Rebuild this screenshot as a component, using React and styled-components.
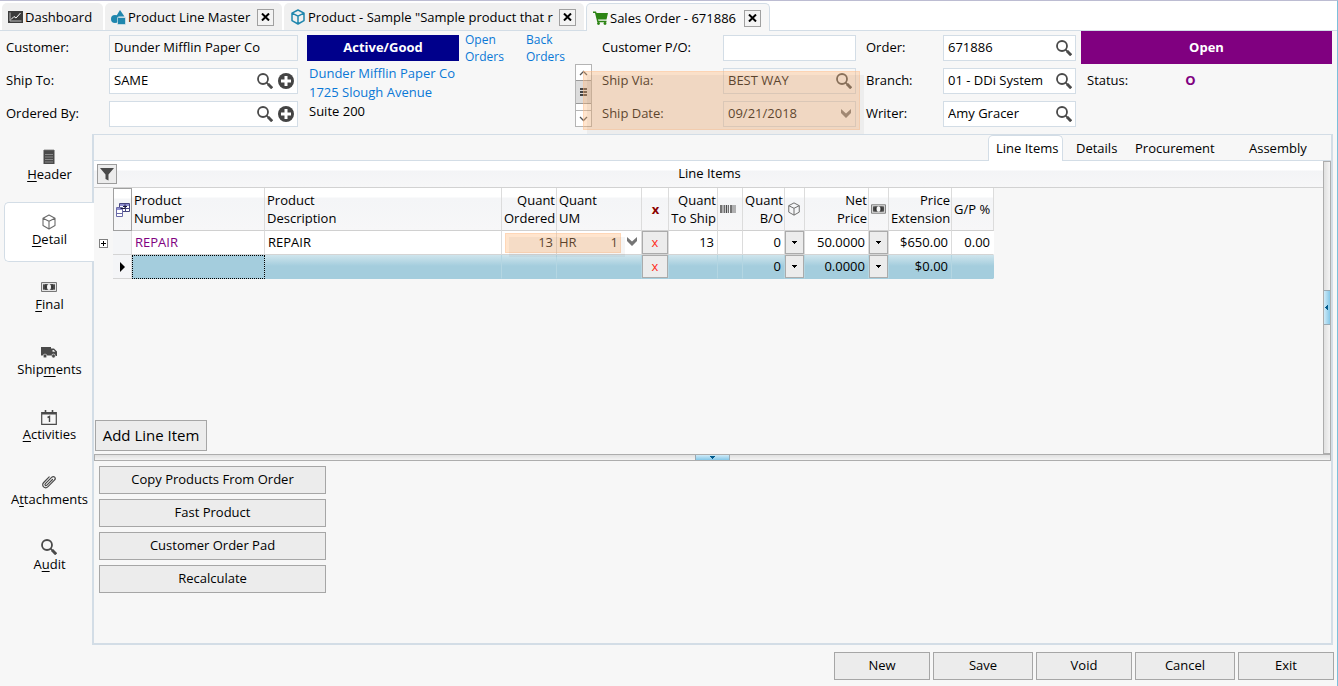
import React from "react";
import styled, { createGlobalStyle, css } from "styled-components";

const line = "#d3dde6";
const ink = "#4a4a4a";
const link = "#0a78d6";

const GlobalStyle = createGlobalStyle`
  * { box-sizing: border-box; }
  body { margin: 0; background: #f7f7f7; }
  body, button, input { font-family: "Open Sans", "Noto Sans", sans-serif; font-size: 13px; line-height: 18px; color: #000; }
  button { padding: 0; cursor: pointer; }
  a { color: ${link}; text-decoration: none; }
  svg { display: block; flex: none; }
`;

const Page = styled.div`
  min-height: 100vh;
  display: flex;
  flex-direction: column;
  border-top: 1px solid #bcbcd2;
  border-right: 1px solid #7cc0dc;
  background: #f7f7f7;
`;

/* document tabs */
const TabBar = styled.nav`
  display: flex;
  gap: 2px;
  height: 30px;
  padding: 2px 0 0 2px;
  background: #fff;
  border-bottom: 1px solid ${line};
`;
const DocTab = styled.div`
  display: flex;
  align-items: center;
  height: 27px;
  padding: 1px 8px 0 6px;
  background: #f0f0f0;
  border-radius: 5px 5px 0 0;
  ${(p) => p.$active && css`
    height: 28px;
    background: #f7f7f7;
    border: 1px solid ${line};
    border-bottom: 0;
  `}
`;
const DocTabLink = styled.a`
  display: flex;
  align-items: center;
  gap: 2px;
  width: ${(p) => p.$w}px;
  white-space: nowrap;
  color: #000;
`;
const CloseButton = styled.button`
  display: grid;
  place-items: center;
  width: 17px;
  height: 17px;
  background: #f3f3f3;
  border: 1px solid #a0a0a0;
`;

/* order header form */
const HeaderForm = styled.form`
  display: flex;
  align-items: flex-start;
  height: 103px;
  padding: 0 5px 0 6px;
`;
const FieldGroup = styled.div`
  position: relative;
  display: grid;
  grid-template-columns: ${(p) => p.$cols};
  grid-auto-rows: 26px;
  row-gap: 7px;
  align-items: center;
  margin: 4px ${(p) => p.$after}px 0 0;
  label { padding-bottom: 2px; }
`;
const Field = styled.div`
  display: flex;
  align-items: center;
  gap: 5px;
  height: 26px;
  padding-right: 3px;
  background: ${(p) => (p.$muted ? "#f7f7f7" : "#fff")};
  border: 1px solid ${line};
`;
const TextInput = styled.input`
  flex: 1;
  min-width: 0;
  height: 24px;
  padding: 0 0 2px 4px;
  border: 0;
  outline: 0;
  background: transparent;
`;
const IconButton = styled.button`
  display: grid;
  place-items: center;
  min-width: 16px;
  height: 16px;
  border: 0;
  background: transparent;
`;
const PickerButton = styled(IconButton)`
  min-width: 12px;
  padding-bottom: 2px;
`;
const Account = styled.div`
  width: 285px;
  margin: 4px 10px 0 0;
`;
const AccountTop = styled.div`
  display: flex;
  height: 26px;
`;
const Standing = styled.div`
  width: 152px;
  line-height: 25px;
  text-align: center;
  font-weight: 700;
  color: #fff;
  background: #00008b;
`;
const OrdersLink = styled.a`
  width: 55px;
  height: 34px;
  margin: -4px 0 0 6px;
  font-size: 12px;
  line-height: 17px;
`;
const AddressBox = styled.div`
  display: flex;
  justify-content: space-between;
  height: 63px;
  margin-top: 3px;
`;
const Address = styled.address`
  display: flex;
  flex-direction: column;
  padding-left: 2px;
  font-style: normal;
  line-height: 19px;
`;
const ScrollBar = styled.div`
  display: flex;
  flex-direction: column;
  justify-content: space-between;
  width: 17px;
  background: #fff;
  border: 1px solid #b4b4b4;
`;
const ScrollPart = styled.button`
  display: grid;
  place-items: center;
  height: ${(p) => p.$h}px;
  border: 0;
  ${(p) => p.$thumb
    ? css`background: #dcdcdc; border-top: 1px solid #999; border-bottom: 1px solid #999; margin-bottom: 6px;`
    : css`background: #fff;`}
  ${(p) => p.$top && css`border-top: 1px solid #b4b4b4;`}
`;
const Marker = styled.div`
  position: absolute;
  z-index: 2;
  pointer-events: none;
  left: ${(p) => p.$x}px;
  top: ${(p) => p.$y}px;
  width: ${(p) => p.$w}px;
  height: ${(p) => p.$h}px;
  background: rgba(255, 184, 120, 0.36);
  border: 1px solid rgba(255, 190, 140, 0.35);
  &::after {
    content: "";
    position: absolute;
    inset: 3px -5px -5px 3px;
    background: rgba(90, 90, 90, 0.06);
  }
`;
const StatusArea = styled.div`
  flex: 1;
  min-width: 180px;
`;
const StatusBanner = styled.div`
  height: 33px;
  line-height: 33px;
  text-align: center;
  font-weight: 700;
  color: #fff;
  background: #800080;
`;
const StatusLine = styled.div`
  display: flex;
  gap: 57px;
  padding: 7px 0 0 6px;
  strong { color: #800080; }
`;

/* body */
const Body = styled.div`
  flex: 1;
  display: flex;
  padding-right: 4px;
`;
const SideNav = styled.nav`
  display: flex;
  flex-direction: column;
  gap: 5px;
  width: 92px;
  padding: 3px 0 0 4px;
`;
const SideItem = styled.a`
  display: flex;
  flex-direction: column;
  align-items: center;
  height: 60px;
  padding: 11px 0 0 1px;
  color: #000;
  border: 1px solid transparent;
  white-space: nowrap;
  ${(p) => p.$active && css`
    z-index: 1;
    margin-right: -2px;
    padding-right: 3px;
    background: #fff;
    border-color: ${line};
    border-right: 0;
    border-radius: 5px 0 0 5px;
  `}
  span { padding-left: 2px; }
  u { text-underline-offset: 2px; }
`;
const Workspace = styled.main`
  flex: 1;
  min-width: 0;
  display: flex;
  flex-direction: column;
  border: 2px solid ${line};
  border-top-width: 1px;
`;
const ViewTabs = styled.nav`
  display: flex;
  justify-content: flex-end;
  height: 26px;
  padding-right: 12px;
  border-bottom: 1px solid ${line};
`;
const ViewTab = styled.a`
  width: ${(p) => p.$w}px;
  height: 26px;
  padding: 3px 0 0 ${(p) => p.$inset}px;
  color: #000;
  border: 1px solid transparent;
  border-bottom: 0;
  ${(p) => p.$active && css`
    background: #fff;
    border-color: ${line};
    border-radius: 5px 5px 0 0;
  `}
`;
const UpperPane = styled.div`
  flex: 1;
  display: flex;
`;
const GridPane = styled.section`
  flex: 1;
  min-width: 0;
  display: flex;
  flex-direction: column;
`;
const GridTitle = styled.div`
  display: flex;
  align-items: center;
  height: 27px;
  padding: 0 21px 0 3px;
  background: linear-gradient(#fff 9px, #f3f4f6 10px, #f7f7f8);
  border-bottom: 1px solid #d2d2d2;
  h2 {
    flex: 1;
    margin: 0;
    padding-bottom: 2px;
    text-align: center;
    font-size: 13px;
    font-weight: 400;
  }
`;
const FilterButton = styled.button`
  display: grid;
  place-items: center;
  width: 20px;
  height: 20px;
  background: #ececec;
  border: 1px solid #9c9c9c;
`;
const Table = styled.table`
  width: 900px;
  table-layout: fixed;
  border-collapse: separate;
  border-spacing: 0;
`;
const Head = styled.th`
  height: 43px;
  padding: 0 1px 0 2px;
  font-weight: ${(p) => (p.$bold ? 700 : 400)};
  color: ${(p) => (p.$bold ? "#8b0000" : "#000")};
  text-align: ${(p) => p.$align || "left"};
  white-space: nowrap;
  background: linear-gradient(#fff 9px, #f4f5f7 10px, #f7f7f8);
  border-right: 1px solid #dcdcdc;
  border-bottom: 1px solid #d0d0d0;
  ${(p) => p.$boxed && css`
    padding: 0;
    border: 1px solid #a0a0a0;
  `}
`;
const Blank = styled.td`
  padding: 0 0 0 5px;
`;
const Cell = styled.td`
  position: relative;
  height: 24px;
  padding: 0 ${(p) => p.$pad || 3}px 2px;
  text-align: ${(p) => p.$align || "left"};
  color: ${(p) => p.$color || "#000"};
  background: #fff;
  border-right: 1px solid #dcdcdc;
  border-bottom: 1px solid #d4d4d4;
  tr[aria-selected="true"] & {
    background: linear-gradient(#cfe5ed, #a4cddd 11px, #a4cddd);
    border-right-color: #b4d6e2;
    border-bottom-color: #a4cddd;
  }
  tr[aria-selected="true"] &:last-child, &:last-child { border-right-color: transparent; }
  ${(p) => p.$focused && css`
    && { outline: 1px dotted #000; outline-offset: -1px; background: #a4cddd !important; }
  `}
  ${(p) => p.$flush && css`padding: 0;`}
`;
const RowMark = styled(Cell)`
  tr[aria-selected] && { background: #f4f5f7; border-bottom-color: #d4d4d4; border-right-color: #dcdcdc; padding: 0 7px; }
`;
const CellButton = styled.button`
  display: grid;
  place-items: center;
  width: 100%;
  height: 23px;
  padding-bottom: 1px;
  color: #ff2a1a;
  background: #ececec;
  border: 1px solid #ababab;
`;
const UnitCell = styled.div`
  display: flex;
  align-items: center;
  gap: 6px;
  margin-right: -1px;
  span:first-child { flex: 1; }
`;
const Expander = styled.button`
  display: grid;
  place-items: center;
  width: 9px;
  height: 9px;
  background: #fff;
  border: 1px solid #808080;
`;
const Center = styled.div`
  display: grid;
  place-items: center;
`;
const PushButton = styled.button`
  width: ${(p) => p.$w}px;
  height: ${(p) => (p.$large ? 31 : 28)}px;
  padding-bottom: 2px;
  font-size: ${(p) => (p.$large ? 15 : 13)}px;
  background: #ececec;
  border: 1px solid #a6a6a6;
`;
const GridActions = styled.div`
  display: flex;
  margin-top: auto;
  padding: 0 0 3px 1px;
`;
const VSplit = styled.div`
  display: flex;
  align-items: center;
  width: 8px;
  background: linear-gradient(90deg, #e0e0e0, #f4f4f4);
  border: 1px solid #adadad;
`;
const HSplit = styled.div`
  display: flex;
  justify-content: center;
  height: 7px;
  background: linear-gradient(#e0e0e0, #f4f4f4);
  border: 1px solid #adadad;
`;
const SplitHandle = styled.button`
  display: grid;
  place-items: center;
  width: ${(p) => (p.$vertical ? 6 : 35)}px;
  height: ${(p) => (p.$vertical ? 35 : 5)}px;
  background: linear-gradient(${(p) => (p.$vertical ? "90deg" : "180deg")}, #cfeaf7, #86c8e8);
  border: 1px solid #9aa9b2;
  border-width: ${(p) => (p.$vertical ? "1px 0" : "0 1px")};
`;
const LowerPane = styled.section`
  display: flex;
  flex-direction: column;
  gap: 5px;
  padding: 5px 5px 50px;
`;
const Footer = styled.footer`
  display: flex;
  justify-content: flex-end;
  gap: 3px;
  padding: 7px 3px 6px;
`;

/* icons */
const Search = ({ size = 16 }) => (
  <svg width={size} height={size} viewBox="0 0 16 16" fill="none" stroke={ink}>
    <circle cx="6" cy="6" r="5" strokeWidth="1.8" />
    <path d="M9.600 9.600l1.800 1.800" strokeWidth="1.600" />
    <path d="M11 11l4.200 4.200" strokeWidth="3" />
  </svg>
);
const Plus = () => (
  <svg width="16" height="16" viewBox="0 0 16 16">
    <circle cx="8" cy="8" r="8" fill="#444" />
    <path d="M8 3v10M3 8h10" stroke="#fff" strokeWidth="3" />
  </svg>
);
const Cross = () => (
  <svg width="9" height="8" viewBox="0 0 9 8">
    <path d="M1 .5l7 7M8 .5l-7 7" stroke="#000" strokeWidth="2" />
  </svg>
);
const ChevronBlock = () => (
  <svg width="10" height="9" viewBox="0 0 10 9" fill="#757575">
    <path d="M0 0l5 4.400L10 0v4L5 9 0 4z" />
  </svg>
);
const Triangle = ({ dir = "down", color = "#000" }) => (
  <svg width="6" height="5" viewBox="0 0 6 5" fill={color} shapeRendering="crispEdges">
    <path d={dir === "down" ? "M0 1h5L2.500 4z" : "M4 0v5L1 2.500z"} />
  </svg>
);
const Cube = ({ size = 16, color = "#6a6a6a", width = 1.1 }) => (
  <svg width={size} height={size} viewBox="0 0 16 16" fill="none" stroke={color} strokeWidth={width} strokeLinejoin="round">
    <path d="M8 1l6 3.200v7.400L8 15l-6-3.400V4.200zM2 4.200l6 3 6-3M8 7.200V15" />
  </svg>
);
const ChartIcon = () => (
  <svg width="15" height="12" viewBox="0 0 15 12">
    <path d="M0 0h15v12H0z" fill="#3c3c3c" />
    <path d="M2 1.500v8.500h11.500" stroke="#bbb" fill="none" />
    <path d="M3 8.500l3-3 2 1.500 4.500-5" stroke="#fff" fill="none" />
  </svg>
);
const Shapes = () => (
  <svg width="15" height="15" viewBox="0 0 15 15" fill="#1f86ad">
    <path d="M9 0l4.500 6.500H5z" />
    <circle cx="4" cy="9" r="4" />
    <path d="M6.500 7.500h8V14.500h-8z" stroke="#f0f0f0" strokeWidth=".6" />
  </svg>
);
const Cart = () => (
  <svg width="15" height="14" viewBox="0 0 15 14" fill="#2c8414">
    <path d="M0 .5h3l.6 1.500H15l-1.500 6.500H5l.5 1.300h8v1.400H4.300L2 2H0z" />
    <circle cx="5.500" cy="12.500" r="1.400" />
    <circle cx="12" cy="12.500" r="1.400" />
  </svg>
);
const Notepad = () => (
  <svg width="16" height="16" viewBox="0 0 16 16">
    <path d="M2.500 1h11v14h-11z" fill={ink} />
    <path d="M4 5.500h8M4 8h8M4 10.500h8M4 13h8" stroke="#999" strokeWidth=".8" />
    <path d="M4 0v2M6 0v2M8 0v2M10 0v2M12 0v2" stroke="#777" strokeWidth=".8" />
  </svg>
);
const Cash = ({ w = 16 }) => (
  <svg width={w} height="16" viewBox="0 0 16 16">
    <path d="M.5 3.500h15v9H.5z" fill="#e4e4e4" stroke="#777" />
    <path d="M2 5h12v6H2z" fill={ink} />
    <path d="M4 6.500h1.500v3H4zM10.500 6.500H12v3h-1.500z" fill="#333" />
    <ellipse cx="8" cy="8" rx="2" ry="3" fill="#f7f7f7" />
    <path d="M2.500 5.500h1M2.500 10.500h1M12.500 5.500h1M12.500 10.500h1" stroke="#aaa" />
  </svg>
);
const Truck = () => (
  <svg width="16" height="16" viewBox="0 0 16 16">
    <path d="M0 3h10v8.500H0zM10 4.500h3l3 3v4.500h-6z" fill={ink} />
    <path d="M11.500 6h1.300l1.500 1.800h-2.800z" fill="#eee" />
    <circle cx="4" cy="12" r="1.900" fill={ink} stroke="#f7f7f7" strokeWidth=".6" />
    <circle cx="12.500" cy="12" r="1.900" fill={ink} stroke="#f7f7f7" strokeWidth=".6" />
  </svg>
);
const Calendar = () => (
  <svg width="16" height="16" viewBox="0 0 16 16" fill="none" stroke={ink}>
    <path d="M.7 3.500h14.600v11.800H.7z" strokeWidth="1.200" />
    <path d="M1 4.500h14" strokeWidth="2" />
    <path d="M4.500 1v3M11.500 1v3" strokeWidth="1.600" />
    <path d="M6.500 8.500L8.500 7.500V13" strokeWidth="1.400" />
  </svg>
);
const Clip = () => (
  <svg width="16" height="16" viewBox="0 0 16 16" fill="none" stroke={ink} strokeWidth="1.200" strokeLinecap="round">
    <path d="M11.500 5.500l-5.600 5.600c-1.200 1.200-2.700-.3-1.500-1.500l6.200-6.200c2.200-2.200 5 .6 2.800 2.800L7 12.600c-3 3-7.300-1-4.300-4.100l5.500-5.600" />
  </svg>
);
const Funnel = () => (
  <svg width="14" height="14" viewBox="0 0 14 14" fill={ink}>
    <path d="M0 1h14L8.500 7.500V13.500L5.500 12v-4.500z" />
  </svg>
);
const FieldChooser = () => (
  <svg width="14" height="14" viewBox="0 0 14 14">
    <path d="M3.500.5h10v8h-10z" fill="#fff" stroke="#45457f" />
    <path d="M4 1h9v2H4z" fill="#8f8fd0" />
    <path d="M4 5.500h9M9.500 3v5" stroke="#45457f" />
    <path d="M.5 4.500h6v9h-6z" fill="#fff" stroke="#6a6aa8" />
    <path d="M1 5h5v2H1z" fill="#8f8fd0" />
    <path d="M1 10.500h5" stroke="#6a6aa8" />
    <path d="M4.500 5.500h4.500v-4M7 3.500h4" stroke="#1a1a3a" fill="none" />
  </svg>
);
const Barcode = () => (
  <svg width="16" height="8" viewBox="0 0 16 8" stroke={ink}>
    <path d="M1 0v8M6.500 0v8M11 0v8" strokeWidth="1.500" />
    <path d="M3 0v8M4.500 0v8M8.500 0v8M13 0v8M15 0v8" strokeWidth=".8" />
  </svg>
);
const Angle = ({ up }) => (
  <svg width="9" height="6" viewBox="0 0 9 6" fill="none" stroke="#555" strokeWidth="1.300">
    <path d={up ? "M1 5l3.500-3.500L8 5" : "M1 1l3.500 3.500L8 1"} />
  </svg>
);
const Grip = () => (
  <svg width="7" height="8" viewBox="0 0 7 8" fill="#444" shapeRendering="crispEdges">
    <path d="M0 0h7v2H0zM0 3h7v2H0zM0 6h7v2H0z" />
  </svg>
);

const sideItems = [
  { icon: <Notepad />, parts: ["", "H", "eader"] },
  { icon: <Cube />, parts: ["", "D", "etail"], active: true },
  { icon: <Cash />, parts: ["", "F", "inal"] },
  { icon: <Truck />, parts: ["Ship", "m", "ents"] },
  { icon: <Calendar />, parts: ["", "A", "ctivities"] },
  { icon: <Clip />, parts: ["A", "t", "tachments"] },
  { icon: <Search />, parts: ["A", "u", "dit"] },
];

const columns = [19, 19, 133, 237, 55, 85, 27, 49, 25, 42, 20, 64, 20, 63, 42];

const rows = [
  { number: "REPAIR", description: "REPAIR", ordered: "13", unit: "HR", factor: "1", toShip: "13", backOrder: "0", price: "50.0000", extension: "$650.00", margin: "0.00" },
  { selected: true, backOrder: "0", price: "0.0000", extension: "$0.00" },
];

function LookupField({ id, label, value, muted, add, picker, plain }) {
  return (
    <>
      <label htmlFor={id}>{label}</label>
      <Field $muted={muted}>
        <TextInput id={id} defaultValue={value} />
        {!plain && !picker && (
          <IconButton type="button" aria-label={`Find ${label}`}><Search /></IconButton>
        )}
        {picker && <PickerButton type="button" aria-label={`Choose ${label}`}><ChevronBlock /></PickerButton>}
        {add && <IconButton type="button" aria-label={`Add ${label}`}><Plus /></IconButton>}
      </Field>
    </>
  );
}

function LineItemRow({ row }) {
  return (
    <tr aria-selected={!!row.selected}>
      <Blank>{!row.selected && (
        <Expander aria-label="Expand row">
          <svg width="5" height="5" viewBox="0 0 5 5" shapeRendering="crispEdges"><path d="M0 2h5v1H0zM2 0h1v5H2z" /></svg>
        </Expander>
      )}</Blank>
      <RowMark>{row.selected && (
        <svg width="5" height="10" viewBox="0 0 5 10"><path d="M0 0l5 5-5 5z" /></svg>
      )}</RowMark>
      <Cell $color="#800080" $focused={row.selected}>{row.number}</Cell>
      <Cell>{row.description}</Cell>
      <Cell $align="right">
        {row.ordered}
        {row.ordered && <Marker $x={3} $y={2} $w={116} $h={20} />}
      </Cell>
      <Cell $pad={2}>{row.unit && (
        <UnitCell>
          <span>{row.unit}</span>
          <span>{row.factor}</span>
          <IconButton aria-label="Choose unit"><ChevronBlock /></IconButton>
        </UnitCell>
      )}</Cell>
      <Cell $flush><CellButton aria-label="Delete line">x</CellButton></Cell>
      <Cell $align="right">{row.toShip}</Cell>
      <Cell />
      <Cell $align="right">{row.backOrder}</Cell>
      <Cell $flush><CellButton aria-label="Stock options"><Triangle /></CellButton></Cell>
      <Cell $align="right">{row.price}</Cell>
      <Cell $flush><CellButton aria-label="Price options"><Triangle /></CellButton></Cell>
      <Cell $align="right">{row.extension}</Cell>
      <Cell $align="right">{row.margin}</Cell>
    </tr>
  );
}

export default function App() {
  return (
    <Page>
      <GlobalStyle />
      <TabBar>
        <DocTab>
          <DocTabLink href="#dashboard" $w={87}><ChartIcon />Dashboard</DocTabLink>
        </DocTab>
        <DocTab>
          <DocTabLink href="#line-master" $w={146}><Shapes />Product Line Master</DocTabLink>
          <CloseButton aria-label="Close Product Line Master"><Cross /></CloseButton>
        </DocTab>
        <DocTab>
          <DocTabLink href="#product" $w={269}><Cube color="#1f86ad" width={1.5} />Product - Sample "Sample product that r</DocTabLink>
          <CloseButton aria-label="Close Product"><Cross /></CloseButton>
        </DocTab>
        <DocTab $active>
          <DocTabLink href="#order" $w={151}><Cart />Sales Order - 671886</DocTabLink>
          <CloseButton aria-label="Close Sales Order"><Cross /></CloseButton>
        </DocTab>
      </TabBar>

      <HeaderForm>
        <FieldGroup $cols="103px 189px" $after={9}>
          <LookupField id="customer" label="Customer:" value="Dunder Mifflin Paper Co" muted plain />
          <LookupField id="shipto" label="Ship To:" value="SAME" add />
          <LookupField id="orderedby" label="Ordered By:" value="" add />
        </FieldGroup>

        <Account>
          <AccountTop>
            <Standing>Active/Good</Standing>
            <OrdersLink href="#open">Open<br />Orders</OrdersLink>
            <OrdersLink href="#back">Back<br />Orders</OrdersLink>
          </AccountTop>
          <AddressBox>
            <Address>
              <a href="#customer">Dunder Mifflin Paper Co</a>
              <a href="#map">1725 Slough Avenue</a>
              <span>Suite 200</span>
            </Address>
            <ScrollBar>
              <ScrollPart type="button" aria-label="Scroll up" $h={15}><Angle up /></ScrollPart>
              <ScrollPart type="button" aria-label="Scroll position" $h={24} $thumb><Grip /></ScrollPart>
              <ScrollPart type="button" aria-label="Scroll down" $h={16} $top><Angle /></ScrollPart>
            </ScrollBar>
          </AddressBox>
        </Account>

        <FieldGroup $cols="121px 133px" $after={10}>
          <LookupField id="po" label="Customer P/O:" value="" plain />
          <LookupField id="via" label="Ship Via:" value="BEST WAY" muted />
          <LookupField id="date" label="Ship Date:" value="09/21/2018" muted picker />
          <Marker $x={-19} $y={36} $w={277} $h={59} />
        </FieldGroup>

        <FieldGroup $cols="77px 133px" $after={5}>
          <LookupField id="order" label="Order:" value="671886" />
          <LookupField id="branch" label="Branch:" value="01 - DDi System" />
          <LookupField id="writer" label="Writer:" value="Amy Gracer" />
        </FieldGroup>

        <StatusArea>
          <StatusBanner>Open</StatusBanner>
          <StatusLine><span>Status:</span><strong>O</strong></StatusLine>
        </StatusArea>
      </HeaderForm>

      <Body>
        <SideNav>
          {sideItems.map(({ icon, parts, active }) => (
            <SideItem key={parts.join("")} href={`#${parts.join("")}`} $active={active}>
              {icon}
              <span>{parts[0]}<u>{parts[1]}</u>{parts[2]}</span>
            </SideItem>
          ))}
        </SideNav>

        <Workspace>
          <ViewTabs>
            <ViewTab href="#lines" $w={75} $inset={7} $active>Line Items</ViewTab>
            <ViewTab href="#details" $w={59} $inset={12}>Details</ViewTab>
            <ViewTab href="#procurement" $w={114} $inset={12}>Procurement</ViewTab>
            <ViewTab href="#assembly" $w={83} $inset={12}>Assembly</ViewTab>
          </ViewTabs>

          <UpperPane>
            <GridPane>
              <GridTitle>
                <FilterButton aria-label="Filter"><Funnel /></FilterButton>
                <h2>Line Items</h2>
              </GridTitle>
              <Table>
                <colgroup>{columns.map((w, i) => <col key={i} width={w} />)}</colgroup>
                <thead>
                  <tr>
                    <Blank />
                    <Head $boxed><Center><FieldChooser /></Center></Head>
                    <Head>Product<br />Number</Head>
                    <Head>Product<br />Description</Head>
                    <Head $align="right">Quant<br />Ordered</Head>
                    <Head>Quant<br />UM</Head>
                    <Head $align="center" $bold>x</Head>
                    <Head $align="right">Quant<br />To Ship</Head>
                    <Head><Barcode /></Head>
                    <Head $align="right">Quant<br />B/O</Head>
                    <Head><Cube size={14} /></Head>
                    <Head $align="right">Net<br />Price</Head>
                    <Head><Cash w={15} /></Head>
                    <Head $align="right">Price<br />Extension</Head>
                    <Head>G/P %</Head>
                  </tr>
                </thead>
                <tbody>{rows.map((row, i) => <LineItemRow key={i} row={row} />)}</tbody>
              </Table>
              <GridActions><PushButton $w={112} $large>Add Line Item</PushButton></GridActions>
            </GridPane>
            <VSplit><SplitHandle $vertical aria-label="Collapse side pane"><Triangle dir="left" color="#005a8c" /></SplitHandle></VSplit>
          </UpperPane>
          <HSplit><SplitHandle aria-label="Collapse lower pane"><Triangle color="#005a8c" /></SplitHandle></HSplit>
          <LowerPane>
            {["Copy Products From Order", "Fast Product", "Customer Order Pad", "Recalculate"].map((t) => (
              <PushButton key={t} $w={227}>{t}</PushButton>
            ))}
          </LowerPane>
        </Workspace>
      </Body>

      <Footer>
        <PushButton $w={96}>New</PushButton>
        <PushButton $w={100}>Save</PushButton>
        <PushButton $w={96}>Void</PushButton>
        <PushButton $w={100}>Cancel</PushButton>
        <PushButton $w={96}>Exit</PushButton>
      </Footer>
    </Page>
  );
}
